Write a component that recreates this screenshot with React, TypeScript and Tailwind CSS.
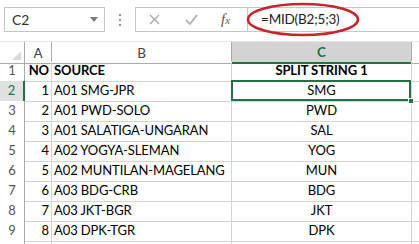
import React from 'react';

const rows = [
  { no: 1, src: 'A01 SMG-JPR', out: 'SMG' },
  { no: 2, src: 'A01 PWD-SOLO', out: 'PWD' },
  { no: 3, src: 'A01 SALATIGA-UNGARAN', out: 'SAL' },
  { no: 4, src: 'A02 YOGYA-SLEMAN', out: 'YOG' },
  { no: 5, src: 'A02 MUNTILAN-MAGELANG', out: 'MUN' },
  { no: 6, src: 'A03 BDG-CRB', out: 'BDG' },
  { no: 7, src: 'A03 JKT-BGR', out: 'JKT' },
  { no: 8, src: 'A03 DPK-TGR', out: 'DPK' },
];

const cols = 'grid grid-cols-[25px_27px_180px_180px_1fr]';

function Toolbar() {
  return (
    <div className="relative flex h-[42px] items-start border-b border-[#e6e6e6] bg-white pt-[7px]">
      {/* name box */}
      <div className="ml-[4px] flex h-[25px] w-[101px] items-center justify-between border border-[#c6c6c6] pl-[7px] pr-[6px] text-[14px] text-[#333]">
        <span>C2</span>
        <svg width="8" height="5" viewBox="0 0 8 5"><path d="M0 0h8L4 5z" fill="#7a7a7a" /></svg>
      </div>
      {/* dots */}
      <div className="ml-[14px] flex h-[25px] flex-col items-center justify-center gap-[3px]">
        <span className="h-[2px] w-[2px] bg-[#9a9a9a]" />
        <span className="h-[2px] w-[2px] bg-[#9a9a9a]" />
        <span className="h-[2px] w-[2px] bg-[#9a9a9a]" />
      </div>
      {/* cancel / enter / fx */}
      <div className="ml-[14px] flex h-[25px] w-[113px] items-center border border-[#c6c6c6]">
        <svg className="ml-[13px]" width="11" height="11" viewBox="0 0 11 11">
          <path d="M1 1l9 9M10 1l-9 9" stroke="#a8a8a8" strokeWidth="1.4" />
        </svg>
        <svg className="ml-[25px]" width="13" height="11" viewBox="0 0 13 11">
          <path d="M1 6l4 4 7-9" stroke="#a8a8a8" strokeWidth="1.6" fill="none" />
        </svg>
        <span className="ml-[23px] font-['Liberation_Serif',serif] text-[15px] italic text-[#555]">
          f<span className="text-[11px]">x</span>
        </span>
      </div>
      {/* formula input */}
      <div className="flex h-[25px] flex-1 items-center border-y border-[#c6c6c6] pl-[13px] text-[13.5px] tracking-[-0.2px] text-[#222]">
        =MID(B2;5;3)
      </div>
      {/* annotation */}
      <svg className="absolute left-[246px] top-[2px]" width="114" height="35" viewBox="0 0 114 35">
        <ellipse cx="57" cy="17.5" rx="55" ry="15.5" fill="none" stroke="#c4262c" strokeWidth="2.6" />
      </svg>
    </div>
  );
}

function Header() {
  return (
    <div className={`${cols} h-[19px] text-[13.5px] text-[#444]`}>
      <div className="relative border-b border-r border-[#ababab] bg-white">
        <svg className="absolute bottom-[3px] right-[3px]" width="9" height="9" viewBox="0 0 9 9">
          <path d="M9 0v9H0z" fill="#d9d9d9" />
        </svg>
      </div>
      <div className="flex items-center justify-center border-b border-r border-[#ababab] bg-white">A</div>
      <div className="flex items-center justify-center border-b border-r border-[#ababab] bg-white">B</div>
      <div className="flex items-center justify-center border-b-2 border-r border-b-[#217346] border-r-[#ababab] bg-[#d3d3d3] font-bold text-[#217346]">C</div>
      <div className="border-b border-[#ababab] bg-white" />
    </div>
  );
}

function Row({ num, a, b, c, bold, selected }: { num: React.ReactNode; a: React.ReactNode; b: string; c: string; bold?: boolean; selected?: boolean }) {
  return (
    <div className={`${cols} h-[20px] whitespace-nowrap text-[13px] tracking-[-0.1px] text-black`}>
      <div
        className={`flex items-center justify-center border-b border-[#d4d4d4] text-[#555] ${
          selected ? 'border-r-2 border-r-[#217346] bg-[#e1e1e1] text-[#217346]' : 'border-r border-r-[#ababab] bg-white'
        }`}
      >
        {num}
      </div>
      <div className={`flex items-center justify-end border-b border-r border-[#d4d4d4] pr-[2px] ${bold ? 'font-bold' : ''}`}>{a}</div>
      <div className={`flex items-center border-b border-r border-[#d4d4d4] pl-[2px] ${bold ? 'font-bold' : ''}`}>{b}</div>
      <div className={`relative flex items-center justify-center border-b border-r border-[#d4d4d4] ${bold ? 'font-bold' : ''}`}>
        {c}
        {selected && (
          <>
            <div className="absolute -left-[1px] -top-[1px] bottom-0 right-0 border-2 border-[#217346]" />
            <div className="absolute -bottom-[3px] -right-[3px] z-10 h-[6px] w-[6px] border border-white bg-[#217346]" />
          </>
        )}
      </div>
      <div className="border-b border-[#d4d4d4]" />
    </div>
  );
}

export default function App() {
  return (
    <div className="h-[244px] w-[419px] overflow-hidden bg-white font-['Lato',sans-serif]">
      <Toolbar />
      <Header />
      <Row num={1} a="NO" b="SOURCE" c="SPLIT STRING 1" bold />
      {rows.map((r, i) => (
        <Row key={r.no} num={i + 2} a={r.no} b={r.src} c={r.out} selected={i === 0} />
      ))}
      <Row num="" a="" b="" c="" />
    </div>
  );
}
